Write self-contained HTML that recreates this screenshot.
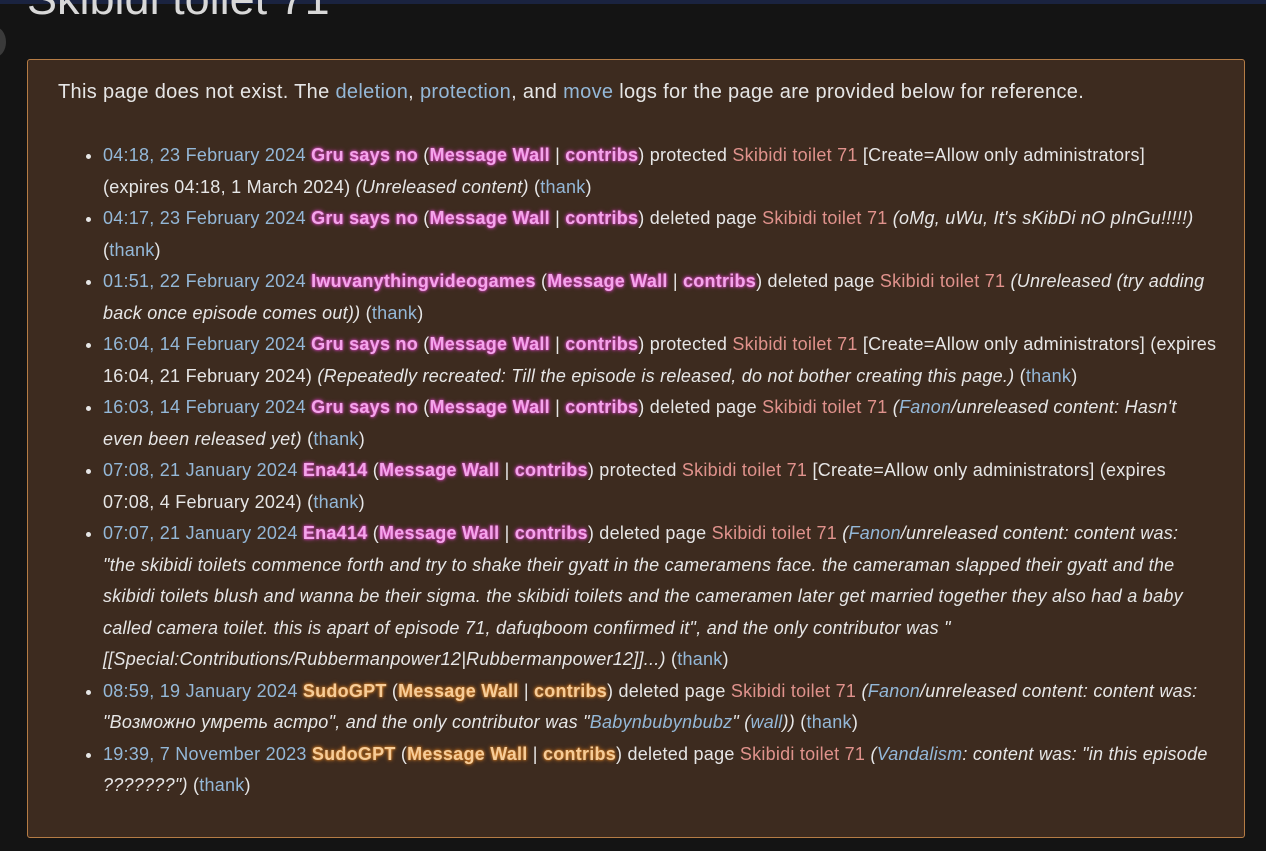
<!DOCTYPE html>
<html><head><meta charset="utf-8"><style>
body{margin:0;background:#141414;width:1266px;height:851px;overflow:hidden;font-family:"Liberation Sans",sans-serif;color:#e6e6e6;position:relative}
.bar{position:absolute;left:0;top:0;width:1266px;height:4px;background:#1a2340}
h1{position:absolute;left:27px;top:-27px;margin:0;font-weight:normal;font-size:45px;color:#d8d8d8;white-space:nowrap}
.circ{position:absolute;left:-16px;top:27px;width:22px;height:30px;border-radius:50%;background:#3a3a3a}
.box{position:absolute;left:27px;top:59px;width:1216px;height:777px;background:#3d2b1f;border:1px solid #b57c45;border-radius:3px}
.intro{position:absolute;left:30px;top:21px;font-size:20px;letter-spacing:0.33px;white-space:nowrap}
ul{position:absolute;left:45px;top:80px;margin:0;padding:0 0 0 30px;font-size:18px;letter-spacing:0.25px;line-height:31.5px;white-space:nowrap}
li{margin:0}
.t,.l{color:#94b8d8}
.p{color:#e0928c}
.u{color:#f4a4ea;font-weight:bold;text-shadow:0 0 4px #d040b8,0 0 2px #d040b8}
.o{color:#f6cc98;font-weight:bold;text-shadow:0 0 4px #d07820,0 0 2px #d07820}
i{color:#e6e6e6}
</style></head><body>
<div class="bar"></div>
<div class="circ"></div>
<h1>Skibidi toilet 71</h1>
<div class="box">
<div class="intro">This page does not exist. The <span class="l">deletion</span>, <span class="l">protection</span>, and <span class="l">move</span> logs for the page are provided below for reference.</div>
<ul>
<li><span class="t">04:18, 23 February 2024</span> <span class="u">Gru says no</span> (<span class="u">Message Wall</span> | <span class="u">contribs</span>) protected <span class="p">Skibidi toilet 71</span> [Create=Allow only administrators]<br>(expires 04:18, 1 March 2024) <i>(Unreleased content)</i> (<span class="l">thank</span>)</li>
<li><span class="t">04:17, 23 February 2024</span> <span class="u">Gru says no</span> (<span class="u">Message Wall</span> | <span class="u">contribs</span>) deleted page <span class="p">Skibidi toilet 71</span> <i>(oMg, uWu, It's sKibDi nO pInGu!!!!!)</i><br>(<span class="l">thank</span>)</li>
<li><span class="t">01:51, 22 February 2024</span> <span class="u">Iwuvanythingvideogames</span> (<span class="u">Message Wall</span> | <span class="u">contribs</span>) deleted page <span class="p">Skibidi toilet 71</span> <i>(Unreleased (try adding<br>back once episode comes out))</i> (<span class="l">thank</span>)</li>
<li><span class="t">16:04, 14 February 2024</span> <span class="u">Gru says no</span> (<span class="u">Message Wall</span> | <span class="u">contribs</span>) protected <span class="p">Skibidi toilet 71</span> [Create=Allow only administrators] (expires<br>16:04, 21 February 2024) <i>(Repeatedly recreated: Till the episode is released, do not bother creating this page.)</i> (<span class="l">thank</span>)</li>
<li><span class="t">16:03, 14 February 2024</span> <span class="u">Gru says no</span> (<span class="u">Message Wall</span> | <span class="u">contribs</span>) deleted page <span class="p">Skibidi toilet 71</span> <i>(<span class="l">Fanon</span>/unreleased content: Hasn't<br>even been released yet)</i> (<span class="l">thank</span>)</li>
<li><span class="t">07:08, 21 January 2024</span> <span class="u">Ena414</span> (<span class="u">Message Wall</span> | <span class="u">contribs</span>) protected <span class="p">Skibidi toilet 71</span> [Create=Allow only administrators] (expires<br>07:08, 4 February 2024) (<span class="l">thank</span>)</li>
<li><span class="t">07:07, 21 January 2024</span> <span class="u">Ena414</span> (<span class="u">Message Wall</span> | <span class="u">contribs</span>) deleted page <span class="p">Skibidi toilet 71</span> <i>(<span class="l">Fanon</span>/unreleased content: content was:<br>"the skibidi toilets commence forth and try to shake their gyatt in the cameramens face. the cameraman slapped their gyatt and the<br>skibidi toilets blush and wanna be their sigma. the skibidi toilets and the cameramen later get married together they also had a baby<br>called camera toilet. this is apart of episode 71, dafuqboom confirmed it", and the only contributor was "<br>[[Special:Contributions/Rubbermanpower12|Rubbermanpower12]]...)</i> (<span class="l">thank</span>)</li>
<li><span class="t">08:59, 19 January 2024</span> <span class="o">SudoGPT</span> (<span class="o">Message Wall</span> | <span class="o">contribs</span>) deleted page <span class="p">Skibidi toilet 71</span> <i>(<span class="l">Fanon</span>/unreleased content: content was:<br>"Возможно умреть астро", and the only contributor was "<span class="l">Babynbubynbubz</span>" (<span class="l">wall</span>))</i> (<span class="l">thank</span>)</li>
<li><span class="t">19:39, 7 November 2023</span> <span class="o">SudoGPT</span> (<span class="o">Message Wall</span> | <span class="o">contribs</span>) deleted page <span class="p">Skibidi toilet 71</span> <i>(<span class="l">Vandalism</span>: content was: "in this episode<br>???????")</i> (<span class="l">thank</span>)</li>
</ul>
</div>
</body></html>
